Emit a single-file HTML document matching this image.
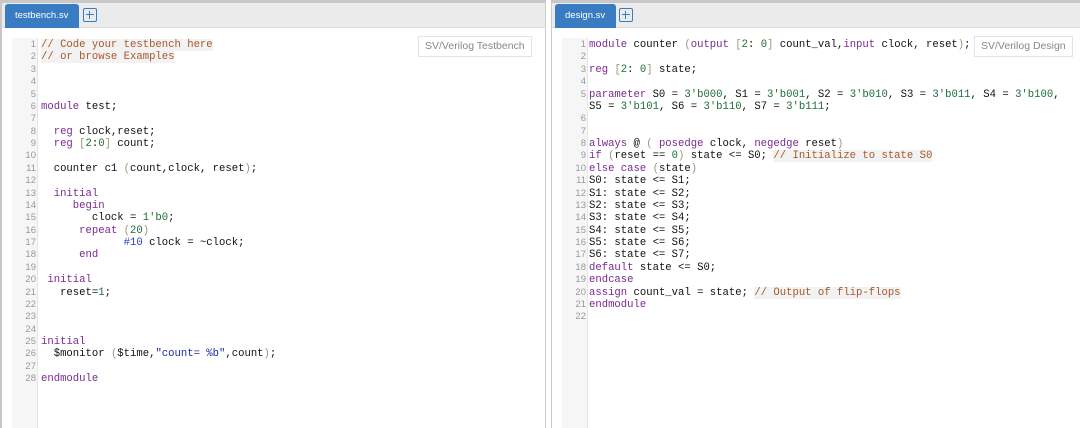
<!DOCTYPE html>
<html><head><style>
body{margin:0;width:1080px;height:425px;background:#fff;position:relative;overflow:hidden;font-family:"Liberation Sans",sans-serif}
.panel{position:absolute;top:0;height:425px;background:#fff;border-top:3px solid #c8c8c8}
.bar{position:absolute;left:0;right:0;top:0;height:24px;background:#ebebeb;border-bottom:1px solid #ddd}
.tab{position:absolute;top:1px;height:24px;background:#3a7cc2;color:#fff;font-size:9.5px;line-height:23px;border-radius:3px 3px 0 0;text-align:left;padding-left:10px;box-sizing:border-box}
.plus{position:absolute;top:5px;width:14px;height:14px;border:1.5px solid #3a7cc2;border-radius:2px;box-sizing:border-box}
.plus:before{content:"";position:absolute;left:2px;right:2px;top:4.75px;height:1.5px;background:#3a7cc2}
.plus:after{content:"";position:absolute;top:2px;bottom:2px;left:4.75px;width:1.5px;background:#3a7cc2}
.gut{position:absolute;top:35px;bottom:0;width:25px;background:#f6f6f6;border-right:1px solid #e6e6e6}
.code{position:absolute;top:36px;font-family:"Liberation Mono",monospace;font-size:10.6px;line-height:12.37px;white-space:pre;color:#111}
.nums{position:absolute;top:36px;font-family:"Liberation Sans",sans-serif;font-size:9.5px;line-height:12.37px;color:#999;text-align:right;width:24px;white-space:pre}
.k{color:#7a2a90}.c{color:#a8582b;background:#f2f2f2}.n{color:#1d6e3a}.b{color:#999977}.s{color:#1c2aa0}.h{color:#2a3fd0}
.badge{position:absolute;top:33px;height:19px;border:1px solid #e4e4e4;background:#fff;color:#888;font-size:10.5px;line-height:19px;padding:0 6px}
</style></head><body>
<div class="panel" style="left:0;width:543px;border-left:2px solid #c8c8c8;border-right:1px solid #ccc">
 <div class="bar"></div>
 <div class="tab" style="left:3px;width:74px">testbench.sv</div>
 <div class="plus" style="left:81px"></div>
 <div class="gut" style="left:10px"></div>
 <div class="nums" style="left:10px">1
2
3
4
5
6
7
8
9
10
11
12
13
14
15
16
17
18
19
20
21
22
23
24
25
26
27
28</div>
 <div class="code" style="left:39px"><span class="c">// Code your testbench here</span>
<span class="c">// or browse Examples</span>


 
<span class="k">module</span> test;

  <span class="k">reg</span> clock,reset;
  <span class="k">reg</span> <span class="b">[</span><span class="n">2</span>:<span class="n">0</span><span class="b">]</span> count;

  counter c1 <span class="b">(</span>count,clock, reset<span class="b">)</span>;

  <span class="k">initial</span>
     <span class="k">begin</span>
        clock = <span class="n">1'b0</span>;
      <span class="k">repeat</span> <span class="b">(</span><span class="n">20</span><span class="b">)</span>
             <span class="h">#10</span> clock = ~clock;
      <span class="k">end</span>

 <span class="k">initial</span>
   reset=<span class="n">1</span>;



<span class="k">initial</span>
  $monitor <span class="b">(</span>$time,<span class="s">"count= %b"</span>,count<span class="b">)</span>;

<span class="k">endmodule</span></div>
 <div class="badge" style="left:416px">SV/Verilog Testbench</div>
</div>
<div style="position:absolute;left:546px;top:0;width:5px;height:425px;background:#fff;border-right:1px solid #ccc"></div>
<div class="panel" style="left:551px;width:529px;border-left:1px solid #c8c8c8">
 <div class="bar"></div>
 <div class="tab" style="left:3px;width:61px">design.sv</div>
 <div class="plus" style="left:67px"></div>
 <div class="gut" style="left:10px"></div>
 <div class="nums" style="left:10px">1
2
3
4
5

6
7
8
9
10
11
12
13
14
15
16
17
18
19
20
21
22</div>
 <div class="code" style="left:37px"><span class="k">module</span> counter <span class="b">(</span><span class="k">output</span> <span class="b">[</span><span class="n">2</span>: <span class="n">0</span><span class="b">]</span> count_val,<span class="k">input</span> clock, reset<span class="b">)</span>;

<span class="k">reg</span> <span class="b">[</span><span class="n">2</span>: <span class="n">0</span><span class="b">]</span> state;

<span class="k">parameter</span> S0 = <span class="n">3'b000</span>, S1 = <span class="n">3'b001</span>, S2 = <span class="n">3'b010</span>, S3 = <span class="n">3'b011</span>, S4 = <span class="n">3'b100</span>,
S5 = <span class="n">3'b101</span>, S6 = <span class="n">3'b110</span>, S7 = <span class="n">3'b111</span>;


<span class="k">always</span> @ <span class="b">(</span> <span class="k">posedge</span> clock, <span class="k">negedge</span> reset<span class="b">)</span>
<span class="k">if</span> <span class="b">(</span>reset == <span class="n">0</span><span class="b">)</span> state &lt;= S0; <span class="c">// Initialize to state S0</span>
<span class="k">else</span> <span class="k">case</span> <span class="b">(</span>state<span class="b">)</span>
S0: state &lt;= S1;
S1: state &lt;= S2;
S2: state &lt;= S3;
S3: state &lt;= S4;
S4: state &lt;= S5;
S5: state &lt;= S6;
S6: state &lt;= S7;
<span class="k">default</span> state &lt;= S0;
<span class="k">endcase</span>
<span class="k">assign</span> count_val = state; <span class="c">// Output of flip-flops</span>
<span class="k">endmodule</span>
</div>
 <div class="badge" style="left:422px">SV/Verilog Design</div>
</div>
</body></html>
